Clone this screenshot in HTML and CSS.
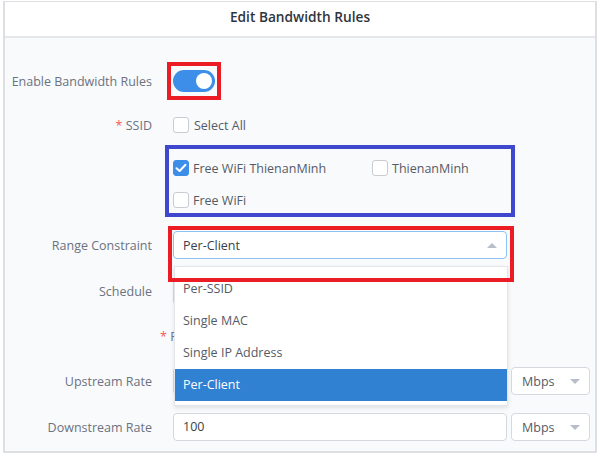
FILE: index.html
```html
<!DOCTYPE html>
<html>
<head>
<meta charset="utf-8">
<link rel="stylesheet" href="styles.css">
</head>
<body>
<div class="panel">
  <div class="header">Edit Bandwidth Rules</div>
  <div class="body">
    <div class="row row-toggle">
      <div class="lbl">Enable Bandwidth Rules</div>
      <div class="ctl">
        <span class="mark-red">
          <span class="toggle"><span class="knob"></span></span>
        </span>
      </div>
    </div>
    <div class="row row-ssid">
      <div class="lbl"><span class="req">*</span> SSID</div>
      <div class="ctl">
        <label class="chk"><span class="box"></span><span>Select All</span></label>
      </div>
    </div>
    <div class="ssid-group">
      <label class="chk"><span class="box checked"><svg width="12" height="10" viewBox="0 0 12 10"><path d="M1.5 5.2 L4.6 8 L10.5 1.8" fill="none" stroke="#fff" stroke-width="2" stroke-linecap="round" stroke-linejoin="round"/></svg></span><span>Free WiFi ThienanMinh</span></label>
      <label class="chk"><span class="box"></span><span>ThienanMinh</span></label>
      <label class="chk"><span class="box"></span><span>Free WiFi</span></label>
    </div>
    <div class="row row-range">
      <div class="lbl">Range Constraint</div>
      <div class="ctl anchor">
        <div class="select focused"><span>Per-Client</span><span class="arrow-up"></span></div>
        <div class="dropdown">
          <div class="item">Per-SSID</div>
          <div class="item">Single MAC</div>
          <div class="item">Single IP Address</div>
          <div class="item active">Per-Client</div>
        </div>
        <div class="mark-red-over"></div>
      </div>
    </div>
    <div class="row row-sched">
      <div class="lbl">Schedule</div>
      <div class="ctl"><div class="select"><span></span><span class="arrow-down"></span></div></div>
    </div>
    <div class="row row-sub">
      <div class="sublbl"><span class="req">*</span> P</div>
    </div>
    <div class="row row-up">
      <div class="lbl">Upstream Rate</div>
      <div class="ctl"><div class="input"></div></div>
      <div class="unit"><div class="select"><span>Mbps</span><span class="arrow-down"></span></div></div>
    </div>
    <div class="row row-down">
      <div class="lbl">Downstream Rate</div>
      <div class="ctl"><div class="input">100</div></div>
      <div class="unit"><div class="select"><span>Mbps</span><span class="arrow-down"></span></div></div>
    </div>
  </div>
</div>
</body>
</html>
```
FILE: styles.css
```css
* { box-sizing: border-box; }
html, body { margin: 0; padding: 0; background: #ffffff; }
body {
  font-family: "Open Sans", "Noto Sans", sans-serif;
  font-size: 12.5px;
  color: #444;
}
.panel {
  margin: 1px 0 0 3px;
  width: 594px;
  height: 452px;
  border: 2px solid #dedfe2;
  border-top-width: 1px;
  background: #f9fafc;
  overflow: hidden;
}
.header {
  height: 36px;
  background: #ffffff;
  border-bottom: 2px solid #e6e7ea;
  text-align: center;
  font-size: 13.7px;
  font-weight: 600;
  color: #2f3540;
  line-height: 29px;
}
.body {
  padding: 24px 0 0 0;
  display: flex;
  flex-direction: column;
}
.row {
  display: flex;
  align-items: center;
}
.lbl {
  width: 147px;
  text-align: right;
  color: #6b7280;
  white-space: nowrap;
}
.req { color: #f25a5a; }
.ctl {
  margin-left: 21px;
  width: 334px;
}
.unit {
  margin-left: 4px;
  width: 79px;
}
.row-toggle { height: 38px; }
.mark-red {
  display: inline-flex;
  margin-left: -6px;
  border: 4px solid #ec1c24;
  padding: 4px 2px;
}
.toggle {
  position: relative;
  display: block;
  width: 42px;
  height: 22px;
  border-radius: 11px;
  background: #3d8ee8;
}
.knob {
  position: absolute;
  right: 3px;
  top: 3px;
  width: 16px;
  height: 16px;
  border-radius: 50%;
  background: #fff;
}
.row-ssid { height: 20px; margin-top: 15px; }
.chk {
  display: flex;
  align-items: center;
  gap: 4px;
  color: #555b66;
  white-space: nowrap;
  height: 20px;
}
.row-ssid .chk { gap: 5px; }
.box {
  width: 16px;
  height: 16px;
  border: 1px solid #c9ccd3;
  border-radius: 3px;
  background: #fff;
  display: flex;
  align-items: center;
  justify-content: center;
  flex: none;
}
.box.checked {
  background: #3d8ee8;
  border-color: #3d8ee8;
}
.ssid-group {
  margin: 10px 0 0 160px;
  width: 350px;
  height: 72px;
  border: 4px solid #3f48cc;
  padding: 9px 0 0 4px;
  display: grid;
  grid-template-columns: 199px 1fr;
  row-gap: 12px;
  align-content: start;
}
.row-range { height: 28px; margin-top: 14px; }
.anchor { position: relative; }
.select {
  height: 28px;
  border: 1px solid #d5d8de;
  border-radius: 4px;
  background: #fff;
  display: flex;
  align-items: center;
  justify-content: space-between;
  padding: 0 9px;
  color: #3a3f47;
}
.select.focused { border-color: #8ec2f2; }
.arrow-up {
  width: 0; height: 0;
  border-left: 5px solid transparent;
  border-right: 5px solid transparent;
  border-bottom: 5px solid #b7bdc9;
}
.arrow-down {
  width: 0; height: 0;
  border-left: 5px solid transparent;
  border-right: 5px solid transparent;
  border-top: 5px solid #b7bdc9;
}
.dropdown {
  position: absolute;
  left: 1px;
  top: 35px;
  width: 334px;
  background: #fff;
  border: 1px solid #e3e5e9;
  padding: 6px 0 4px 0;
  box-shadow: 0 2px 4px rgba(0,0,0,0.10);
  z-index: 5;
}
.item {
  height: 32px;
  line-height: 32px;
  padding-left: 8px;
  color: #555b66;
}
.item.active {
  background: #3081d2;
  color: #fff;
}
.mark-red-over {
  position: absolute;
  left: -5px;
  top: -5px;
  width: 346px;
  height: 56px;
  border: 4px solid #ec1c24;
  z-index: 6;
}
.row-sched { height: 28px; margin-top: 18px; }
.row-sub { height: 28px; margin-top: 17px; }
.sublbl { margin-left: 155px; color: #6b7280; white-space: nowrap; }
.row-up { height: 28px; margin-top: 17px; }
.row-down { height: 28px; margin-top: 18px; }
.input {
  height: 28px;
  border: 1px solid #d5d8de;
  border-radius: 4px;
  background: #fff;
  padding: 0 9px;
  line-height: 26px;
  color: #3a3f47;
}
.unit .select { padding: 0 9px 0 10px; color: #555b66; }
```
